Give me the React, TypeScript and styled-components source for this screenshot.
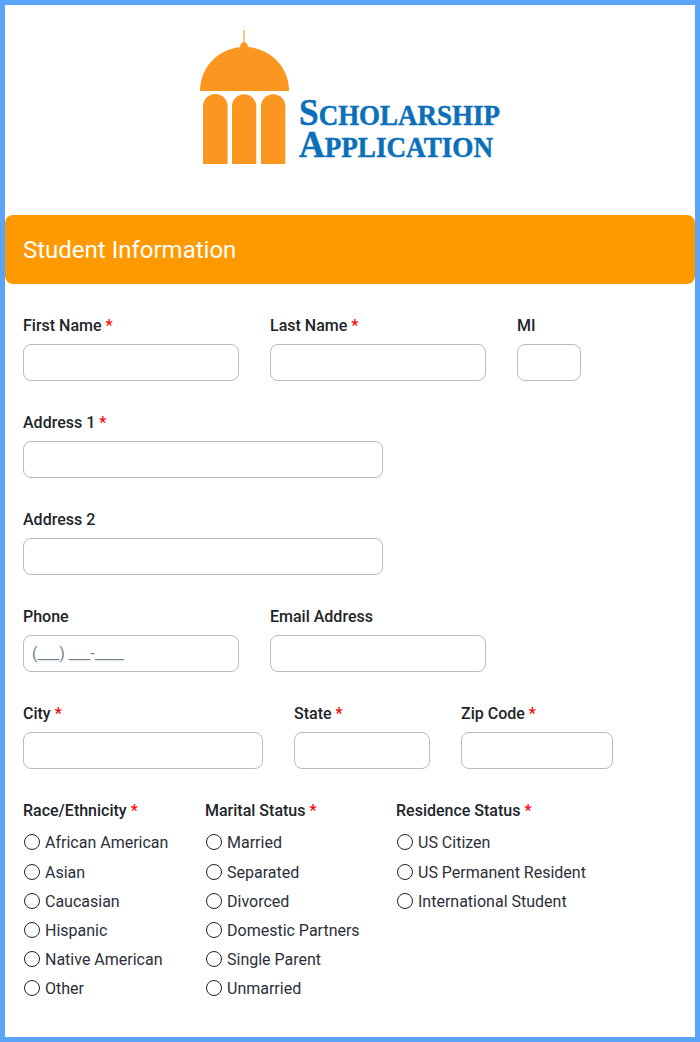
import React from 'react';
import styled, { createGlobalStyle } from 'styled-components';

const GlobalStyle = createGlobalStyle`
  html, body {
    margin: 0;
    padding: 0;
    background: #fff;
  }
  * {
    box-sizing: border-box;
  }
`;

const Page = styled.div`
  width: 700px;
  height: 1042px;
  border: 5px solid #5ba4f7;
  background: #fff;
  font-family: Roboto, "Liberation Sans", sans-serif;
  color: #212529;
  overflow: hidden;
`;

const LogoWrap = styled.div`
  display: flex;
  justify-content: center;
  padding-top: 25px;
  height: 210px;
`;

const SectionHeader = styled.h1`
  margin: 0;
  height: 69px;
  padding-left: 18px;
  display: flex;
  align-items: center;
  background: #ff9900;
  border-radius: 8px;
  color: #fff;
  font-size: 24px;
  font-weight: 400;
`;

const Form = styled.form`
  display: flex;
  flex-direction: column;
  gap: 32px;
  padding: 32px 18px 0;
`;

const Row = styled.div`
  display: flex;
  gap: 31px;
`;

const Field = styled.div`
  display: flex;
  flex-direction: column;
  gap: 9px;
`;

const Label = styled.label`
  display: block;
  padding: 0;
  font-size: 16px;
  line-height: 19px;
  font-weight: 500;
`;

const Required = styled.span`
  color: #f00;
`;

const TextInput = styled.input<{ $width: number }>`
  display: block;
  width: ${p => p.$width}px;
  height: 37px;
  padding: 0 8px;
  border: 1px solid #bbb;
  border-radius: 8px;
  background: #fff;
  font: 400 16px Roboto, "Liberation Sans", sans-serif;
  &::placeholder {
    color: #71808f;
    opacity: 1;
  }
`;

const ChoiceRow = styled.div`
  display: flex;
`;

const ChoiceColumn = styled.fieldset<{ $width: number }>`
  width: ${p => p.$width}px;
  margin: 0;
  padding: 0;
  border: 0;
`;

const ChoiceList = styled.div`
  display: flex;
  flex-direction: column;
  gap: 10px;
  margin-top: 13px;
`;

const Choice = styled.label`
  display: flex;
  align-items: flex-start;
  gap: 5px;
  padding-left: 1px;
  height: 19px;
  font-size: 16px;
  line-height: 19px;
  color: #2b2f3a;
  &:first-child {
    margin-bottom: 1px;
  }
`;

const Radio = styled.input.attrs({ type: 'radio' })`
  appearance: none;
  width: 16px;
  height: 16px;
  margin: 1px 0 0;
  border: 1.5px solid #222;
  border-radius: 50%;
  background: #fff;
  flex: none;
`;

const LogoText = styled.text`
  font-family: "Liberation Serif", serif;
  font-weight: 700;
  fill: #0a70b9;
  stroke: #0a70b9;
  stroke-width: 0.5px;
`;

const Logo = () => (
  <svg width="300" height="136" viewBox="0 0 300 136" overflow="visible" aria-label="Scholarship Application">
    <rect x="43" y="0" width="2" height="13" fill="#f6c98a" />
    <path d="M40 18 C40 14 41.5 12 44 12 C46.5 12 48 14 48 18 Z" fill="#fb9620" />
    <path d="M0 61 C0 36 20 17 44.5 17 C69 17 89 36 89 61 Z" fill="#fb9620" />
    <path d="M3 134 V76.3 A12.3 12.3 0 0 1 27.6 76.3 V134 Z" fill="#fb9620" />
    <path d="M32 134 V76.3 A12.15 12.15 0 0 1 56.3 76.3 V134 Z" fill="#fb9620" />
    <path d="M61 134 V76.3 A12.15 12.15 0 0 1 85.3 76.3 V134 Z" fill="#fb9620" />
    <LogoText x="99" y="95" textLength="201" lengthAdjust="spacingAndGlyphs">
      <tspan fontSize="38">S</tspan>
      <tspan fontSize="29">CHOLARSHIP</tspan>
    </LogoText>
    <LogoText x="99" y="127" textLength="194" lengthAdjust="spacingAndGlyphs">
      <tspan fontSize="38">A</tspan>
      <tspan fontSize="29">PPLICATION</tspan>
    </LogoText>
  </svg>
);

const races = ['African American', 'Asian', 'Caucasian', 'Hispanic', 'Native American', 'Other'];
const maritals = ['Married', 'Separated', 'Divorced', 'Domestic Partners', 'Single Parent', 'Unmarried'];
const residences = ['US Citizen', 'US Permanent Resident', 'International Student'];

const groups = [
  { name: 'Race/Ethnicity', width: 182, options: races },
  { name: 'Marital Status', width: 191, options: maritals },
  { name: 'Residence Status', width: 250, options: residences },
];

const App: React.FC = () => (
  <Page>
    <GlobalStyle />
    <LogoWrap>
      <Logo />
    </LogoWrap>
    <SectionHeader>Student Information</SectionHeader>
    <Form>
      <Row>
        <Field>
          <Label>First Name <Required>*</Required></Label>
          <TextInput $width={216} />
        </Field>
        <Field>
          <Label>Last Name <Required>*</Required></Label>
          <TextInput $width={216} />
        </Field>
        <Field>
          <Label>MI</Label>
          <TextInput $width={64} />
        </Field>
      </Row>
      <Row>
        <Field>
          <Label>Address 1 <Required>*</Required></Label>
          <TextInput $width={360} />
        </Field>
      </Row>
      <Row>
        <Field>
          <Label>Address 2</Label>
          <TextInput $width={360} />
        </Field>
      </Row>
      <Row>
        <Field>
          <Label>Phone</Label>
          <TextInput $width={216} placeholder="(___) ___-____" />
        </Field>
        <Field>
          <Label>Email Address</Label>
          <TextInput $width={216} />
        </Field>
      </Row>
      <Row>
        <Field>
          <Label>City <Required>*</Required></Label>
          <TextInput $width={240} />
        </Field>
        <Field>
          <Label>State <Required>*</Required></Label>
          <TextInput $width={136} />
        </Field>
        <Field>
          <Label>Zip Code <Required>*</Required></Label>
          <TextInput $width={152} />
        </Field>
      </Row>
      <ChoiceRow>
        {groups.map(group => (
          <ChoiceColumn key={group.name} $width={group.width}>
            <Label as="legend">{group.name} <Required>*</Required></Label>
            <ChoiceList>
              {group.options.map(option => (
                <Choice key={option}>
                  <Radio name={group.name} />
                  {option}
                </Choice>
              ))}
            </ChoiceList>
          </ChoiceColumn>
        ))}
      </ChoiceRow>
    </Form>
  </Page>
);

export default App;
